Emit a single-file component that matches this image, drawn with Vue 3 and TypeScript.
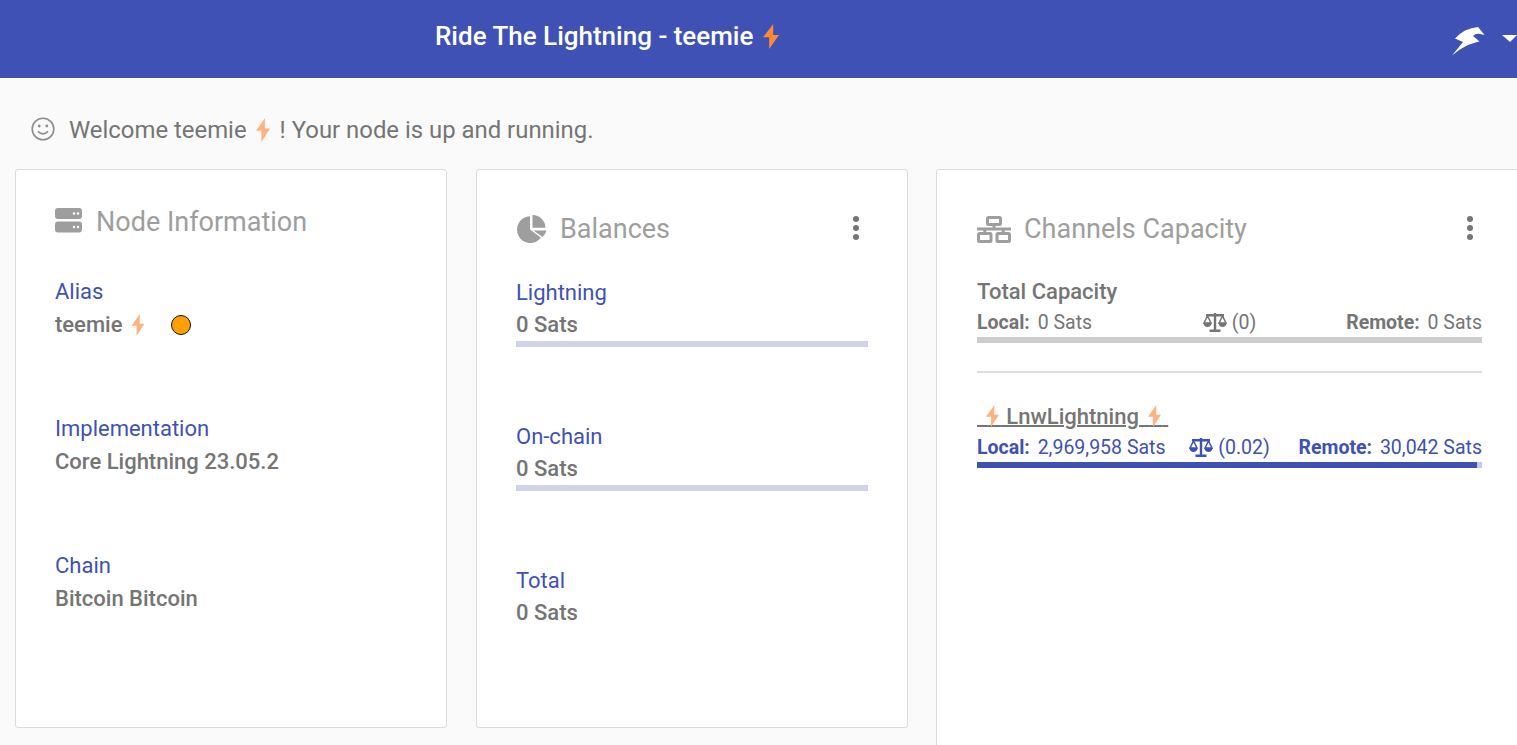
<script setup lang="ts">
const BOLT = 'M9 0 L0 12.8 H5.4 V24 L14 10.6 H8.8 Z'

const nodeFields = [
  { label: 'Alias', value: 'teemie', hasBolt: true },
  { label: 'Implementation', value: 'Core Lightning 23.05.2', hasBolt: false },
  { label: 'Chain', value: 'Bitcoin Bitcoin', hasBolt: false },
]

const balances = [
  { label: 'Lightning', showBar: true },
  { label: 'On-chain', showBar: true },
  { label: 'Total', showBar: false },
]
</script>

<template>
  <div class="page">
    <header class="topbar">
      <div class="topbar-title">
        <span>Ride The Lightning - teemie</span>
        <svg class="bolt bolt--header" viewBox="0 0 14 24" preserveAspectRatio="none"><path :d="BOLT" /></svg>
      </div>
      <div class="topbar-user">
        <svg class="logo" viewBox="0 0 33 29">
          <path d="M0 28.5 L11 15 L3 11.5 Q7 7 13 3.5 Q20 0.5 26 0 Q29 3.5 32.5 8 L27 6.8 Q23.5 6.2 21 9 Q24 11.5 27.5 14.5 Q19 16.5 14 19 Q6 23 0 28.5 Z" />
        </svg>
        <span class="caret" />
      </div>
    </header>

    <main class="content">
      <div class="welcome">
        <svg class="smile" viewBox="0 0 24 24">
          <circle cx="12" cy="12" r="10.8" />
          <path d="M7 14.4 Q12 19.4 17 14.4" />
          <circle class="eye" cx="8.2" cy="9" r="1.4" />
          <circle class="eye" cx="15.8" cy="9" r="1.4" />
        </svg>
        <span>Welcome teemie</span>
        <svg class="bolt bolt--soft" viewBox="0 0 14 24"><path :d="BOLT" /></svg>
        <span>! Your node is up and running.</span>
      </div>

      <div class="cards">
        <section class="card card--node">
          <div class="card-head card-head--node">
            <svg class="icon-server" viewBox="0 0 27 25">
              <rect width="27" height="11" rx="3" />
              <rect y="13.5" width="27" height="11" rx="3" />
              <g class="dots">
                <circle cx="19" cy="5.5" r="1.2" />
                <circle cx="23" cy="5.5" r="1.2" />
                <circle cx="19" cy="19" r="1.2" />
                <circle cx="23" cy="19" r="1.2" />
              </g>
            </svg>
            <h2>Node Information</h2>
          </div>
          <div v-for="field in nodeFields" :key="field.label" class="field field--node">
            <div class="label">{{ field.label }}</div>
            <div class="value">
              <span>{{ field.value }}</span>
              <template v-if="field.hasBolt">
                <svg class="bolt bolt--soft bolt--value" viewBox="0 0 14 24"><path :d="BOLT" /></svg>
                <span class="status-dot" />
              </template>
            </div>
          </div>
        </section>

        <section class="card">
          <div class="card-head">
            <svg class="icon-pie" viewBox="0 0 30 28">
              <path d="M13 1.2 A13.4 13.4 0 1 0 24 22.8 L13 14.5 Z" />
              <path d="M15.5 0 A13 13 0 0 1 28.5 12.8 H15.5 Z" />
              <path d="M16.5 15.4 H29.5 A13.5 13.5 0 0 1 25.5 22 Z" />
            </svg>
            <h2>Balances</h2>
            <span class="more"><i /><i /><i /></span>
          </div>
          <div v-for="item in balances" :key="item.label" class="field field--balance">
            <div class="label">{{ item.label }}</div>
            <div class="value">0 Sats</div>
            <div v-if="item.showBar" class="bar bar--balance" />
          </div>
        </section>

        <section class="card card--wide">
          <div class="card-head">
            <svg class="icon-network" viewBox="0 0 34 27">
              <rect x="10.5" y="1.5" width="13" height="7" rx="1" />
              <rect x="1.5" y="17.5" width="12.5" height="8" rx="1" />
              <rect x="20" y="17.5" width="12.5" height="8" rx="1" />
              <path d="M17 8.7 V13 M0 13 H34 M7.8 13 V17.3 M26.2 13 V17.3" />
            </svg>
            <h2>Channels Capacity</h2>
            <span class="more"><i /><i /><i /></span>
          </div>

          <div class="capacity-title">Total Capacity</div>
          <div class="capacity-row">
            <div><b>Local:</b> 0 Sats</div>
            <div class="ratio">
              <svg class="icon-scale" viewBox="0 0 24 20">
                <path class="scale-lines" d="M12 1 V18 M6.5 18.8 H17.5 M3 3.2 H21" />
                <path class="scale-pan" d="M4.5 4 L1 11 H8 Z M19.5 4 L16 11 H23 Z" />
                <path class="scale-fill" d="M0.4 11 H8.6 Q8 15 4.5 15 Q1 15 0.4 11 Z M15.4 11 H23.6 Q23 15 19.5 15 Q16 15 15.4 11 Z" />
              </svg>
              (0)
            </div>
            <div class="right"><b>Remote:</b> 0 Sats</div>
          </div>
          <div class="bar bar--empty" />

          <div class="divider" />

          <div class="capacity-title capacity-title--channel">
            <span class="channel-name">&nbsp;&nbsp;<span class="bolt-slot">&nbsp;&nbsp;<svg class="bolt bolt--soft" viewBox="0 0 14 24"><path :d="BOLT" /></svg></span>&nbsp;LnwLightning&nbsp;&nbsp;<span class="bolt-slot">&nbsp;&nbsp;<svg class="bolt bolt--soft" viewBox="0 0 14 24"><path :d="BOLT" /></svg></span>&nbsp;</span>
          </div>
          <div class="capacity-row capacity-row--active">
            <div><b>Local:</b> 2,969,958 Sats</div>
            <div class="ratio">
              <svg class="icon-scale" viewBox="0 0 24 20">
                <path class="scale-lines" d="M12 1 V18 M6.5 18.8 H17.5 M3 3.2 H21" />
                <path class="scale-pan" d="M4.5 4 L1 11 H8 Z M19.5 4 L16 11 H23 Z" />
                <path class="scale-fill" d="M0.4 11 H8.6 Q8 15 4.5 15 Q1 15 0.4 11 Z M15.4 11 H23.6 Q23 15 19.5 15 Q16 15 15.4 11 Z" />
              </svg>
              (0.02)
            </div>
            <div class="right"><b>Remote:</b> 30,042 Sats</div>
          </div>
          <div class="bar bar--channel"><div class="bar-fill" :style="{ width: '99%' }" /></div>
        </section>
      </div>
    </main>
  </div>
</template>

<style>
html,
body {
  margin: 0;
  height: 100%;
  overflow: hidden;
  background: #fafafa;
}
</style>

<style scoped>
.page {
  height: 745px;
  overflow: hidden;
  font-family: Roboto, 'Liberation Sans', sans-serif;
  color: #757575;
  background: #fafafa;
}

.topbar {
  height: 78px;
  box-sizing: border-box;
  padding: 0 0 6px 435px;
  display: flex;
  align-items: center;
  justify-content: space-between;
  background: #3f51b5;
  color: #fff;
}

.topbar-title {
  display: flex;
  align-items: center;
  gap: 10px;
  font-size: 26px;
  font-weight: 500;
}

.bolt {
  display: inline-block;
  width: 14px;
  height: 24px;
  flex: none;
}

.bolt--header {
  width: 16px;
  height: 25px;
}

.bolt--header path {
  fill: #ff8a33;
}

.bolt--soft path {
  fill: #ffb27f;
}

.topbar-user {
  display: flex;
  align-items: center;
  gap: 17px;
  margin-top: 10px;
}

.logo {
  width: 33px;
  height: 29px;
  fill: #fff;
}

.caret {
  width: 0;
  height: 0;
  margin-bottom: 6px;
  border-left: 8px solid transparent;
  border-right: 7px solid transparent;
  border-top: 7px solid #fff;
}

.content {
  padding: 0 0 0 15px;
}

.welcome {
  height: 91px;
  box-sizing: border-box;
  padding: 13px 0 0 16px;
  display: flex;
  align-items: center;
  font-size: 23.9px;
  color: #757575;
}

.smile {
  width: 24px;
  height: 24px;
  margin: 0 14px 2px 0;
  fill: none;
  stroke: #8e8e8e;
  stroke-width: 1.6;
}

.smile .eye {
  fill: #8e8e8e;
  stroke: none;
}

.welcome .bolt {
  margin: 0 10px 0 9px;
}

.cards {
  display: grid;
  grid-template-columns: 432px 432px 600px;
  column-gap: 29px;
  align-items: start;
}

.card {
  height: 559px;
  box-sizing: border-box;
  padding: 42px 39px 0;
  background: #fff;
  border: 1px solid #dcdcdc;
  border-radius: 3px;
}

.card--node {
  padding-top: 34px;
}

.card--wide {
  height: 700px;
  margin-left: -1px;
  padding: 42px 54px 0 40px;
}

.card-head {
  height: 34px;
  margin-bottom: 31px;
  display: flex;
  align-items: center;
  color: #9e9e9e;
}

.card-head--node {
  height: 36px;
  margin-bottom: 35px;
}

.card-head h2 {
  margin: 0;
  font-size: 27px;
  font-weight: 400;
}

.icon-server {
  width: 27px;
  height: 25px;
  margin: 0 14px 3px 0;
  fill: #9e9e9e;
}

.icon-server .dots {
  fill: #fff;
}

.icon-pie {
  width: 30px;
  height: 28px;
  margin: 0 13px 0 1px;
  fill: #9e9e9e;
}

.icon-network {
  width: 34px;
  height: 27px;
  margin-right: 13px;
  fill: none;
  stroke: #9e9e9e;
  stroke-width: 3;
}

.more {
  margin: 0 9px 2px auto;
  display: flex;
  flex-direction: column;
  gap: 3px;
}

.more i {
  width: 6px;
  height: 6px;
  border-radius: 50%;
  background: #757575;
}

.field--node {
  height: 137px;
}

.field--balance {
  height: 144px;
}

.label {
  height: 33px;
  line-height: 33px;
  font-size: 22px;
  color: #3f51b5;
}

.value {
  height: 33px;
  display: flex;
  align-items: center;
  font-size: 22px;
  font-weight: 500;
  color: #757575;
}

.field--balance .label,
.field--balance .value {
  height: 32px;
  line-height: 32px;
}

.bolt--value {
  width: 14px;
  height: 22px;
  margin-left: 9px;
}

.status-dot {
  width: 18px;
  height: 18px;
  margin-left: 26px;
  border: 1px solid #111;
  border-radius: 50%;
  background: #ffa000;
}

.bar--balance {
  height: 6px;
  background: #cfd3ec;
}

.capacity-title {
  height: 32px;
  line-height: 32px;
  margin-top: -1px;
  font-size: 22px;
  font-weight: 500;
  color: #757575;
}

.capacity-title--channel {
  margin-top: 28px;
}

.channel-name {
  text-decoration: underline;
  text-decoration-thickness: 2px;
  white-space: pre;
}

.bolt-slot {
  position: relative;
  letter-spacing: 1px;
}

.bolt-slot .bolt {
  position: absolute;
  left: -2px;
  top: 1px;
  width: 13px;
  height: 22px;
}

.capacity-row {
  height: 28px;
  display: grid;
  grid-template-columns: 1fr auto 1fr;
  align-items: center;
  font-size: 19.5px;
  color: #757575;
}

.capacity-row b {
  font-weight: 700;
  margin-right: 3px;
}

.capacity-row--active {
  color: #3f51b5;
}

.ratio {
  display: flex;
  align-items: center;
  gap: 5px;
}

.icon-scale {
  width: 24px;
  height: 20px;
  fill: none;
  stroke: currentColor;
}

.scale-lines {
  stroke-width: 2.4;
}

.scale-pan {
  stroke-width: 1.5;
}

.scale-fill {
  fill: currentColor;
  stroke: none;
}

.right {
  text-align: right;
}

.bar--empty {
  height: 6px;
  margin-top: 1px;
  background: #cdcdcd;
}

.divider {
  height: 2px;
  margin-top: 28px;
  background: #e0e0e0;
}

.bar--channel {
  height: 6px;
  margin-top: 1px;
  background: #c5cae9;
}

.bar-fill {
  height: 100%;
  background: #3f51b5;
}
</style>
